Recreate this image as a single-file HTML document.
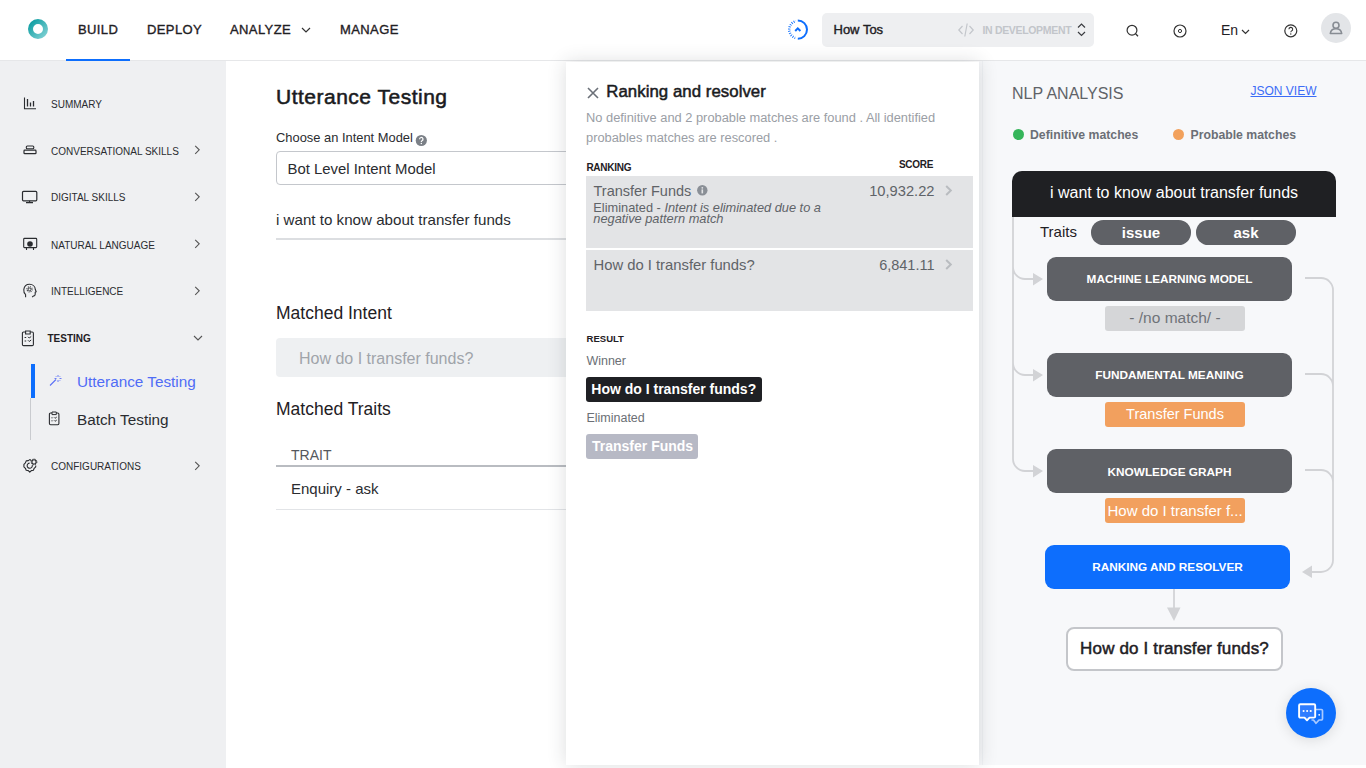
<!DOCTYPE html>
<html><head><meta charset="utf-8">
<style>
*{box-sizing:border-box;margin:0;padding:0}
html,body{width:1366px;height:768px;overflow:hidden;font-family:"Liberation Sans",sans-serif;background:#fff;color:#1f2024}
.a{position:absolute;line-height:1;white-space:nowrap}
svg{position:absolute;overflow:visible}
#hdr{position:absolute;left:0;top:0;width:1366px;height:61px;background:#fff;border-bottom:1px solid #e6e7e9;z-index:2}
.nav{position:absolute;top:23.2px;font-size:13px;line-height:1;font-weight:normal;color:#1f2024;letter-spacing:0.4px;-webkit-text-stroke:0.35px #1f2024}
#side{position:absolute;left:0;top:61px;width:226px;height:707px;background:#eff0f2;z-index:1}
.si{position:absolute;left:51px;font-size:10px;line-height:1;color:#2a2c30;white-space:nowrap}
#main{position:absolute;left:226px;top:61px;width:753px;height:707px;background:#fff}
#right{position:absolute;left:979px;top:61px;width:387px;height:704px;background:#f7f8fa}
#mid{position:absolute;left:566px;top:62px;width:413px;height:703px;background:#fff;box-shadow:0 0 18px rgba(40,44,52,.16);z-index:3}
</style></head><body>
<div id="hdr">
  <svg width="20" height="20" style="left:28px;top:19px"><defs><linearGradient id="lg" x1="0" y1="0" x2="1" y2="1"><stop offset="0" stop-color="#0e9ea2"/><stop offset="1" stop-color="#7ccfd2"/></linearGradient></defs><circle cx="10" cy="10" r="7.5" fill="none" stroke="url(#lg)" stroke-width="5"/></svg>
  <div class="nav" style="left:78px">BUILD</div>
  <div style="position:absolute;left:66px;top:59px;width:64px;height:2px;background:#0d6efd"></div>
  <div class="nav" style="left:147px">DEPLOY</div>
  <div class="nav" style="left:230px">ANALYZE</div>
  <svg width="10" height="6" style="left:301px;top:27px"><path d="M1 1 L5 5 L9 1" fill="none" stroke="#333" stroke-width="1.2"/></svg>
  <div class="nav" style="left:340px">MANAGE</div>

  <svg width="24" height="24" style="left:786px;top:18px"><path d="M11.8 2.4 A9.2 9.2 0 0 1 11.8 20.8" fill="none" stroke="#0d6efd" stroke-width="2"/><circle cx="11.8" cy="11.6" r="8.6" fill="none" stroke="#0d6efd" stroke-width="2.4" stroke-dasharray="0.9 1.35" stroke-dashoffset="0" style="clip-path:inset(0 12.2px 0 0)"/><path d="M9.2 13 L11.8 10.4 L14.4 13" fill="none" stroke="#0d6efd" stroke-width="2"/></svg>
  <div style="position:absolute;left:822px;top:13px;width:272px;height:34px;border-radius:5px;background:#eeeff1"></div>
  <div class="a" style="left:833.5px;top:23.2px;font-size:13px;font-weight:normal;-webkit-text-stroke:0.4px #1f2024;color:#1f2024">How Tos</div>
  <svg width="16" height="14" style="left:958px;top:23px"><path d="M4.5 3 L0.8 7 L4.5 11 M11.5 3 L15.2 7 L11.5 11 M9.2 0.5 L6.8 13.5" fill="none" stroke="#c3c6cb" stroke-width="1.2"/></svg>
  <div class="a" style="left:982.5px;top:25px;font-size:10.5px;font-weight:bold;letter-spacing:-0.33px;color:#c2c5ca">IN DEVELOPMENT</div>
  <svg width="10" height="14" style="left:1077px;top:23px"><path d="M1 4.5 L4.5 1 L8 4.5 M1 9 L4.5 12.5 L8 9" fill="none" stroke="#3a3c40" stroke-width="1.2"/></svg>

  <svg width="14" height="14" style="left:1126px;top:24px"><circle cx="6" cy="6.2" r="4.9" fill="none" stroke="#333" stroke-width="1.2"/><path d="M9.6 9.8 L12 12.2" stroke="#333" stroke-width="1.3"/></svg>
  <svg width="14" height="14" style="left:1173px;top:24px"><circle cx="7" cy="7" r="6" fill="none" stroke="#333" stroke-width="1.2"/><circle cx="7" cy="7" r="1.6" fill="none" stroke="#333" stroke-width="1"/></svg>
  <div class="a" style="left:1221px;top:23.2px;font-size:14px;color:#1f2024">En</div>
  <svg width="10" height="6" style="left:1241px;top:29px"><path d="M1 1 L4.5 4.5 L8 1" fill="none" stroke="#333" stroke-width="1.2"/></svg>
  <svg width="15" height="15" style="left:1284px;top:24px"><circle cx="6.8" cy="6.8" r="6" fill="none" stroke="#333" stroke-width="1.2"/><path d="M4.9 5.3 A1.9 1.9 0 1 1 7.4 7.1 C6.9 7.4 6.8 7.7 6.8 8.3" fill="none" stroke="#333" stroke-width="1.1"/><circle cx="6.8" cy="10" r="0.7" fill="#333"/></svg>
  <div style="position:absolute;left:1321px;top:13px;width:30px;height:30px;border-radius:50%;background:#e3e5e8"></div>
  <svg width="16" height="14" style="left:1328px;top:21px"><circle cx="8" cy="4.3" r="3" fill="none" stroke="#878c93" stroke-width="1.6"/><path d="M2.3 12.5 C2.8 9 5 7.8 8 7.8 C11 7.8 13.2 9 13.7 12.5 Z" fill="none" stroke="#878c93" stroke-width="1.6" stroke-linejoin="round"/></svg>
</div>

<div id="side">
  <!-- summary icon -->
  <svg width="16" height="16" style="left:22px;top:35px"><path d="M2.5 1.5 V12.8 H14" fill="none" stroke="#2a2c30" stroke-width="1.1"/><path d="M5.5 3 V10.5 M8.5 6.5 V10.5 M11.5 5 V10.5" stroke="#2a2c30" stroke-width="1.3"/></svg>
  <div class="si" style="top:38.5px">SUMMARY</div>
  <svg width="16" height="12" style="left:22px;top:83px"><rect x="4.3" y="2" width="7.5" height="2.8" rx="1" fill="none" stroke="#2a2c30" stroke-width="1.1"/><rect x="2" y="6.2" width="12" height="3.5" rx="0.8" fill="none" stroke="#2a2c30" stroke-width="1.2"/></svg>
  <div class="si" style="top:85.6px">CONVERSATIONAL SKILLS</div>
  <svg width="18" height="14" style="left:21px;top:128px"><rect x="1.5" y="2.4" width="14.3" height="9.4" rx="1" fill="none" stroke="#2a2c30" stroke-width="1.2"/><path d="M8.6 11.8 V13.6 M5 13.6 H12" stroke="#2a2c30" stroke-width="1.1"/></svg>
  <div class="si" style="top:132.4px">DIGITAL SKILLS</div>
  <svg width="18" height="16" style="left:21px;top:175px"><rect x="2.7" y="2.4" width="13" height="9.2" rx="0.8" fill="none" stroke="#2a2c30" stroke-width="1.1"/><circle cx="9" cy="8" r="2.8" fill="#2a2c30"/><path d="M5.5 11.6 V14 M12.5 11.6 V14" stroke="#2a2c30" stroke-width="1.1"/></svg>
  <div class="si" style="top:179.5px">NATURAL LANGUAGE</div>
  <svg width="16" height="16" style="left:22px;top:222px"><path d="M3.6 14.2 V11.6 C2 10.2 1.6 8.6 1.8 6.6 C2.2 3.3 4.6 1.3 7.6 1.3 C10.8 1.3 13.2 3.6 13.3 6.5 L14.2 8.7 L13.2 9.2 V11.3 C13.2 12.4 12.3 13.1 11.2 13.1 L10.2 14.2" fill="none" stroke="#2a2c30" stroke-width="1.1" stroke-linejoin="round"/><circle cx="7.6" cy="6.4" r="1.4" fill="none" stroke="#2a2c30" stroke-width="0.9"/><circle cx="7.6" cy="6.4" r="2.6" fill="none" stroke="#2a2c30" stroke-width="1.2" stroke-dasharray="0.9 1.14"/></svg>
  <div class="si" style="top:226.2px">INTELLIGENCE</div>
  <svg width="14" height="17" style="left:21px;top:269px"><rect x="1.4" y="2" width="11" height="13.6" rx="1.2" fill="none" stroke="#2a2c30" stroke-width="1.1"/><path d="M4.6 1 H9.2 V4 H4.6 Z" fill="#eff0f2" stroke="#2a2c30" stroke-width="1.1"/><path d="M3.6 7.5 H5.2 M3.6 11 H5.2 M7 6.8 L8.2 8 L10.2 6.5 M7 10.3 L8.2 11.5 L10.2 10" fill="none" stroke="#2a2c30" stroke-width="1"/></svg>
  <div class="si" style="top:273.2px;left:47.5px;font-weight:bold;color:#1f2024">TESTING</div>
  <svg width="12" height="8" style="left:193px;top:273.5px"><path d="M1 1 L5 5 L9 1" fill="none" stroke="#555" stroke-width="1.1"/></svg>

  <div style="position:absolute;left:30px;top:337px;width:1px;height:42px;background:#c9cbcf"></div>
  <div style="position:absolute;left:31px;top:303px;width:4px;height:34px;background:#0d6efd"></div>
  <svg width="14" height="14" style="left:49px;top:313px"><path d="M1 11.5 L7 5.5" stroke="#5b6ff5" stroke-width="1.1"/><path d="M9 1 V3 M9 6 V8 M5.5 4.5 H7.5 M10.5 4.5 H12.5 M6.8 2.2 L7.5 2.9 M11.2 2.2 L10.5 2.9 M11.2 6.8 L10.5 6.1" stroke="#5b6ff5" stroke-width="0.9"/></svg>
  <div class="a" style="left:77px;top:312.7px;font-size:15.3px;color:#4f6cf6">Utterance Testing</div>
  <svg width="14" height="15" style="left:48px;top:350px"><rect x="1.4" y="2" width="9.5" height="11.7" rx="1.2" fill="none" stroke="#2a2c30" stroke-width="1.1"/><path d="M4 1 H8.3 V3.6 H4 Z" fill="#eff0f2" stroke="#2a2c30" stroke-width="1"/><path d="M3.4 6.8 H4.6 M3.4 9.8 H4.6 M6 6.3 L7 7.3 L8.8 6 M6 9.3 L7 10.3 L8.8 9" fill="none" stroke="#2a2c30" stroke-width="0.9"/></svg>
  <div class="a" style="left:77px;top:350.6px;font-size:15.3px;color:#2a2c30">Batch Testing</div>

  <svg width="17" height="16" style="left:22px;top:397px"><path d="M9.2 2.4 L7.8 1.6 L6.3 2.6 L4.2 2.9 L3.4 4.9 L1.9 6.4 V8.8 L3.4 10.3 L4.2 12.3 L6.3 12.6 L7.8 14.2 L9.3 12.6 L11.4 12.3 L12.2 10.3 L13.7 8.8 V7.6" fill="none" stroke="#2a2c30" stroke-width="1.1" stroke-linejoin="round"/><path d="M10.3 7.2 A2.6 2.6 0 1 1 7.6 5.1" fill="none" stroke="#2a2c30" stroke-width="1.1"/><circle cx="12" cy="3.9" r="2.1" fill="none" stroke="#2a2c30" stroke-width="1.1"/><circle cx="12" cy="3.9" r="2.9" fill="none" stroke="#2a2c30" stroke-width="0.9" stroke-dasharray="1.2 1.1"/></svg>
  <div class="si" style="top:401.4px">CONFIGURATIONS</div>

  <svg width="8" height="10" style="left:194px;top:84px"><path d="M1.2 0.8 L5.2 4.8 L1.2 8.8" fill="none" stroke="#555" stroke-width="1.1"/></svg>
  <svg width="8" height="10" style="left:194px;top:131px"><path d="M1.2 0.8 L5.2 4.8 L1.2 8.8" fill="none" stroke="#555" stroke-width="1.1"/></svg>
  <svg width="8" height="10" style="left:194px;top:178px"><path d="M1.2 0.8 L5.2 4.8 L1.2 8.8" fill="none" stroke="#555" stroke-width="1.1"/></svg>
  <svg width="8" height="10" style="left:194px;top:225px"><path d="M1.2 0.8 L5.2 4.8 L1.2 8.8" fill="none" stroke="#555" stroke-width="1.1"/></svg>
  <svg width="8" height="10" style="left:194px;top:400px"><path d="M1.2 0.8 L5.2 4.8 L1.2 8.8" fill="none" stroke="#555" stroke-width="1.1"/></svg>
</div>

<div id="main">
  <div class="a" style="left:50px;top:24.6px;font-size:21px;font-weight:normal;letter-spacing:0.5px;-webkit-text-stroke:0.55px #1a1b1e;color:#1a1b1e">Utterance Testing</div>
  <div class="a" style="left:50px;top:71.1px;font-size:12.9px;color:#2a2c30">Choose an Intent Model</div>
  <svg width="13" height="13" style="left:189px;top:73px"><circle cx="6.3" cy="6.5" r="5.6" fill="#7b8087"/><path d="M4.6 5.2 A1.7 1.7 0 1 1 7 6.7 C6.5 7 6.3 7.3 6.3 8" fill="none" stroke="#fff" stroke-width="1.2"/><circle cx="6.3" cy="9.6" r="0.75" fill="#fff"/></svg>
  <div style="position:absolute;left:50px;top:90px;width:400px;height:34px;border:1px solid #c4c7cc;border-radius:4px"></div>
  <div class="a" style="left:61.5px;top:100.6px;font-size:14.9px;color:#2a2c30">Bot Level Intent Model</div>
  <div class="a" style="left:50px;top:150.8px;font-size:15.15px;color:#2a2c30">i want to know about transfer funds</div>
  <div style="position:absolute;left:50px;top:177px;width:400px;height:2px;background:#dcdee1"></div>
  <div class="a" style="left:50px;top:243.7px;font-size:17.5px;color:#1f2024">Matched Intent</div>
  <div style="position:absolute;left:50px;top:277px;width:400px;height:39px;border-radius:4px;background:#eef0f2"></div>
  <div class="a" style="left:73px;top:289.6px;font-size:16px;color:#a0a4aa">How do I transfer funds?</div>
  <div class="a" style="left:50px;top:339.5px;font-size:17.5px;color:#1f2024">Matched Traits</div>
  <div class="a" style="left:65px;top:387.2px;font-size:14px;color:#55585d">TRAIT</div>
  <div style="position:absolute;left:50px;top:404px;width:400px;height:2px;background:#b9bcc1"></div>
  <div class="a" style="left:65px;top:420px;font-size:15px;color:#2a2c30">Enquiry - ask</div>
  <div style="position:absolute;left:50px;top:448px;width:400px;height:1px;background:#e2e4e7"></div>
</div>

<div style="position:absolute;left:982px;top:61px;width:1px;height:704px;background:rgba(120,130,145,0.06);z-index:1"></div><div id="right">
  <div class="a" style="left:33px;top:25px;font-size:16px;color:#5f6368">NLP ANALYSIS</div>
  <div class="a" style="left:271.5px;top:24.4px;font-size:12px;color:#3b6cf6;text-decoration:underline">JSON VIEW</div>
  <div style="position:absolute;left:33.5px;top:67.5px;width:11.5px;height:11.5px;border-radius:50%;background:#35b55a"></div>
  <div class="a" style="left:51px;top:67.8px;font-size:12.25px;font-weight:bold;color:#6b6f76">Definitive matches</div>
  <div style="position:absolute;left:193.5px;top:67.5px;width:11.5px;height:11.5px;border-radius:50%;background:#f2a15c"></div>
  <div class="a" style="left:211.5px;top:67.8px;font-size:12.25px;font-weight:bold;color:#6b6f76">Probable matches</div>
</div>


<div style="position:absolute;left:1012px;top:171px;width:324px;height:46px;border-radius:10px 10px 0 0;background:#1f2023"></div>
<div class="a" style="left:1012px;width:324px;text-align:center;top:185.4px;font-size:16px;color:#fff">i want to know about transfer funds</div>
<div class="a" style="left:1040px;top:223.8px;font-size:15px;color:#1f2024">Traits</div>
<div style="position:absolute;left:1091px;top:220.4px;width:100px;height:24.6px;border-radius:12.3px;background:#5f6166"></div>
<div class="a" style="left:1091px;width:100px;text-align:center;top:225.1px;font-size:15px;font-weight:bold;color:#fff">issue</div>
<div style="position:absolute;left:1196px;top:220.4px;width:100px;height:24.6px;border-radius:12.3px;background:#5f6166"></div>
<div class="a" style="left:1196px;width:100px;text-align:center;top:225.1px;font-size:15px;font-weight:bold;color:#fff">ask</div>
<svg width="1366" height="768" style="left:0;top:0">
 <g fill="none" stroke="#d2d3d6" stroke-width="1.8">
  <path d="M1013 217 V459 A12 12 0 0 0 1025 471 H1034 M1013 267 A12 12 0 0 0 1025 279 H1034 M1013 363 A12 12 0 0 0 1025 375 H1034"/>
  <path d="M1305 278 H1321 A12 12 0 0 1 1333 290 V560 A12 12 0 0 1 1321 572 H1312 M1305 374 H1321 A12 12 0 0 1 1333 386 M1305 470 H1321 A12 12 0 0 1 1333 482"/>
  <path d="M1174 589 V609"/>
 </g>
 <g fill="#d2d3d6">
  <path d="M1033 273 L1043 279 L1033 285.5 Z M1033 369 L1043 375 L1033 381.5 Z M1033 465 L1043 471 L1033 477.5 Z"/>
  <path d="M1312 565.5 L1302 572 L1312 578 Z"/>
  <path d="M1167 607.5 L1180.5 607.5 L1174 621 Z"/>
 </g>
</svg>
<div style="position:absolute;left:1047px;top:257px;width:245px;height:43.6px;border-radius:9px;background:#5f6166"></div>
<div class="a" style="left:1047px;width:245px;text-align:center;top:274.2px;font-size:11.8px;font-weight:bold;color:#fff">MACHINE LEARNING MODEL</div>
<div style="position:absolute;left:1105px;top:306px;width:140px;height:25px;border-radius:3px;background:#d5d6d8"></div>
<div class="a" style="left:1105px;width:140px;text-align:center;top:310px;font-size:15.5px;color:#6f7378">- /no match/ -</div>
<div style="position:absolute;left:1047px;top:353px;width:245px;height:43.6px;border-radius:9px;background:#5f6166"></div>
<div class="a" style="left:1047px;width:245px;text-align:center;top:370.3px;font-size:11.8px;font-weight:bold;color:#fff">FUNDAMENTAL MEANING</div>
<div style="position:absolute;left:1105px;top:402px;width:140px;height:25px;border-radius:3px;background:#f2a05e"></div>
<div class="a" style="left:1105px;width:140px;text-align:center;top:407px;font-size:14.5px;color:#fff">Transfer Funds</div>
<div style="position:absolute;left:1047px;top:449px;width:245px;height:43.6px;border-radius:9px;background:#5f6166"></div>
<div class="a" style="left:1047px;width:245px;text-align:center;top:466.5px;font-size:11.8px;font-weight:bold;color:#fff">KNOWLEDGE GRAPH</div>
<div style="position:absolute;left:1105px;top:498px;width:140px;height:25px;border-radius:3px;background:#f2a05e"></div>
<div class="a" style="left:1107.5px;top:502.8px;font-size:15px;color:#fff">How do I transfer f...</div>
<div style="position:absolute;left:1045px;top:545px;width:245px;height:44px;border-radius:9px;background:#0d6efd"></div>
<div class="a" style="left:1045px;width:245px;text-align:center;top:561.9px;font-size:11.8px;font-weight:bold;color:#fff">RANKING AND RESOLVER</div>
<div style="position:absolute;left:1066px;top:627px;width:217px;height:43.5px;border:2px solid #c4c6ca;border-radius:8px;background:#fff"></div>
<div class="a" style="left:1066px;width:217px;text-align:center;top:640.2px;font-size:17px;font-weight:normal;letter-spacing:0.15px;-webkit-text-stroke:0.5px #1f2024;color:#1f2024">How do I transfer funds?</div>
<div style="position:absolute;left:1286px;top:688px;width:50px;height:50px;border-radius:50%;background:#0d6efd;box-shadow:0 2px 14px rgba(0,0,0,.12)"></div>
<svg width="30" height="24" style="left:1297px;top:702px">
  <path d="M14.5 7.5 H24.3 A1.2 1.2 0 0 1 25.5 8.7 V16.8 A1.2 1.2 0 0 1 24.3 18 H22 L19 21.3 L16.5 18 H14.5" fill="none" stroke="#a9c9ff" stroke-width="1.7" stroke-linejoin="round"/>
  <path d="M3.3 2.3 H17 A1.2 1.2 0 0 1 18.2 3.5 V14.4 A1.2 1.2 0 0 1 17 15.6 H12.5 L10 18.3 L7.5 15.6 H3.3 A1.2 1.2 0 0 1 2.1 14.4 V3.5 A1.2 1.2 0 0 1 3.3 2.3 Z" fill="#2f7dff" stroke="#fff" stroke-width="1.9" stroke-linejoin="round"/>
  <circle cx="6.6" cy="9" r="1.05" fill="#fff"/><circle cx="10.15" cy="9" r="1.05" fill="#fff"/><circle cx="13.7" cy="9" r="1.05" fill="#fff"/>
  <circle cx="22.2" cy="12.8" r="0.9" fill="#fff"/>
</svg>
<div id="mid">
  <svg width="12" height="12" style="left:21px;top:25px"><path d="M1 1 L11 11 M11 1 L1 11" stroke="#6b7078" stroke-width="1.6"/></svg>
  <div class="a" style="left:40.3px;top:21.9px;font-size:16.8px;font-weight:normal;letter-spacing:0.05px;-webkit-text-stroke:0.5px #1a1b1e;color:#1a1b1e">Ranking and resolver</div>
  <div style="position:absolute;left:20px;top:45.5px;width:370px;font-size:12.85px;line-height:20px;color:#9a9ea5">No definitive and 2 probable matches are found . All identified probables matches are rescored .</div>
  <div class="a" style="left:20.4px;top:100.8px;font-size:10px;font-weight:bold;letter-spacing:-0.25px;color:#1f2024">RANKING</div>
  <div class="a" style="left:333px;top:97.8px;font-size:10px;font-weight:bold;letter-spacing:-0.3px;color:#1f2024">SCORE</div>
  <div style="position:absolute;left:20px;top:114px;width:387px;height:71.5px;background:#e3e4e6"></div>
  <div style="position:absolute;left:20px;top:188px;width:387px;height:60.5px;background:#e3e4e6"></div>
  <div class="a" style="left:27.5px;top:121.9px;font-size:14.5px;color:#5f6368">Transfer Funds</div>
  <svg width="11" height="11" style="left:131.3px;top:123.2px"><circle cx="5.3" cy="5.3" r="5.2" fill="#8a8f96"/><rect x="4.5" y="4.4" width="1.6" height="4" fill="#e3e4e6"/><circle cx="5.3" cy="2.8" r="0.9" fill="#e3e4e6"/></svg>
  <div class="a" style="left:250px;width:118.5px;text-align:right;top:121.9px;font-size:14.7px;color:#5f6368">10,932.22</div>
  <svg width="8" height="12" style="left:379px;top:123px"><path d="M1.2 1 L5.8 5.5 L1.2 10" fill="none" stroke="#b9bcc0" stroke-width="2"/></svg>
  <div style="position:absolute;left:27.3px;top:139.75px;width:260px;font-size:12.8px;line-height:11.5px;color:#5f6368">Eliminated - <i>Intent is eliminated due to a negative pattern match</i></div>
  <div class="a" style="left:27.5px;top:196px;font-size:14.8px;color:#5f6368">How do I transfer funds?</div>
  <div class="a" style="left:250px;width:118.5px;text-align:right;top:196px;font-size:14.5px;color:#5f6368">6,841.11</div>
  <svg width="8" height="12" style="left:379px;top:197px"><path d="M1.2 1 L5.8 5.5 L1.2 10" fill="none" stroke="#b9bcc0" stroke-width="2"/></svg>
  <div class="a" style="left:20.6px;top:272.4px;font-size:9.5px;font-weight:bold;color:#1f2024">RESULT</div>
  <div class="a" style="left:20.4px;top:293.2px;font-size:12.5px;color:#6b6f75">Winner</div>
  <div style="position:absolute;left:20px;top:315px;width:176px;height:25px;border-radius:3px;background:#1f2024"></div>
  <div class="a" style="left:25.3px;top:320.05px;font-size:14px;font-weight:bold;color:#fff">How do I transfer funds?</div>
  <div class="a" style="left:20.4px;top:349.9px;font-size:12.5px;color:#6b6f75">Eliminated</div>
  <div style="position:absolute;left:20px;top:372px;width:112px;height:25px;border-radius:3px;background:#b7b9c5"></div>
  <div class="a" style="left:26px;top:376.7px;font-size:14px;font-weight:bold;color:#fff">Transfer Funds</div>
</div>
</body></html>
